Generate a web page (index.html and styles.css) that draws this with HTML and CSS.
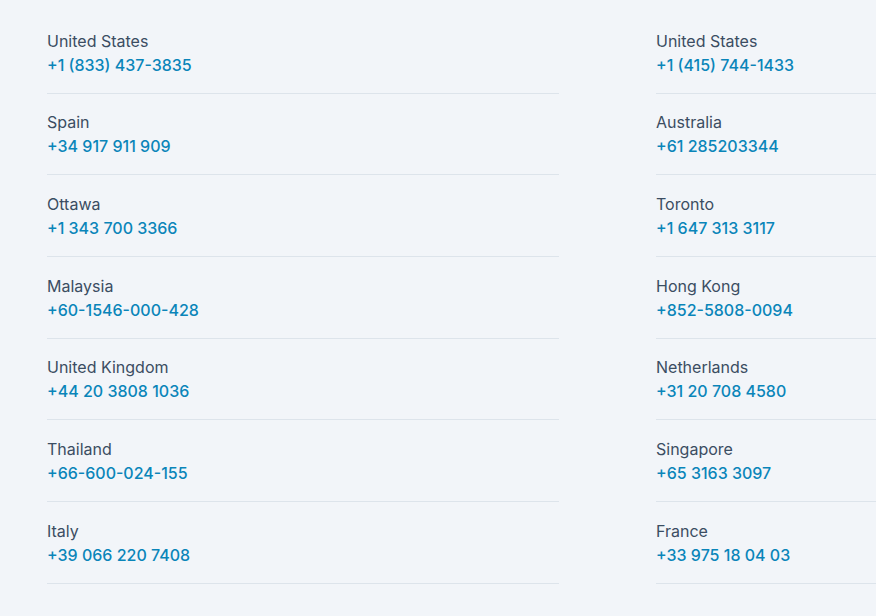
FILE: index.html
```html
<!DOCTYPE html>
<html>
<head>
<meta charset="utf-8">
<link rel="stylesheet" href="styles.css">
</head>
<body>
<div class="page">
  <div class="grid">
    <div class="col">
      <div class="row"><div class="label">United States</div><div class="phone">+1 (833) 437-3835</div></div>
      <div class="row"><div class="label">Spain</div><div class="phone">+34 917 911 909</div></div>
      <div class="row"><div class="label">Ottawa</div><div class="phone">+1 343 700 3366</div></div>
      <div class="row"><div class="label">Malaysia</div><div class="phone">+60-1546-000-428</div></div>
      <div class="row"><div class="label">United Kingdom</div><div class="phone">+44 20 3808 1036</div></div>
      <div class="row"><div class="label">Thailand</div><div class="phone">+66-600-024-155</div></div>
      <div class="row"><div class="label">Italy</div><div class="phone">+39 066 220 7408</div></div>
    </div>
    <div class="col">
      <div class="row"><div class="label">United States</div><div class="phone">+1 (415) 744-1433</div></div>
      <div class="row"><div class="label">Australia</div><div class="phone">+61 285203344</div></div>
      <div class="row"><div class="label">Toronto</div><div class="phone">+1 647 313 3117</div></div>
      <div class="row"><div class="label">Hong Kong</div><div class="phone">+852-5808-0094</div></div>
      <div class="row"><div class="label">Netherlands</div><div class="phone">+31 20 708 4580</div></div>
      <div class="row"><div class="label">Singapore</div><div class="phone">+65 3163 3097</div></div>
      <div class="row"><div class="label">France</div><div class="phone">+33 975 18 04 03</div></div>
    </div>
  </div>
</div>
</body>
</html>
```
FILE: styles.css
```css
html, body {
  margin: 0;
  padding: 0;
  background: #f2f5f9;
  overflow: hidden;
}
body {
  font-family: Inter, "Noto Sans", sans-serif;
  font-size: 16px;
  line-height: 24px;
}
.page {
  padding: 12px 0 0 47px;
  width: 1200px;
}
.grid {
  display: flex;
  gap: 97px;
}
.col {
  width: 512px;
  flex: none;
}
.row {
  padding: 16.67px 0 16px;
  border-bottom: 1px solid #dde4eb;
}
.label {
  color: #3b4d62;
  font-weight: 400;
}
.phone {
  color: #0a85b9;
  font-weight: 500;
}
```
